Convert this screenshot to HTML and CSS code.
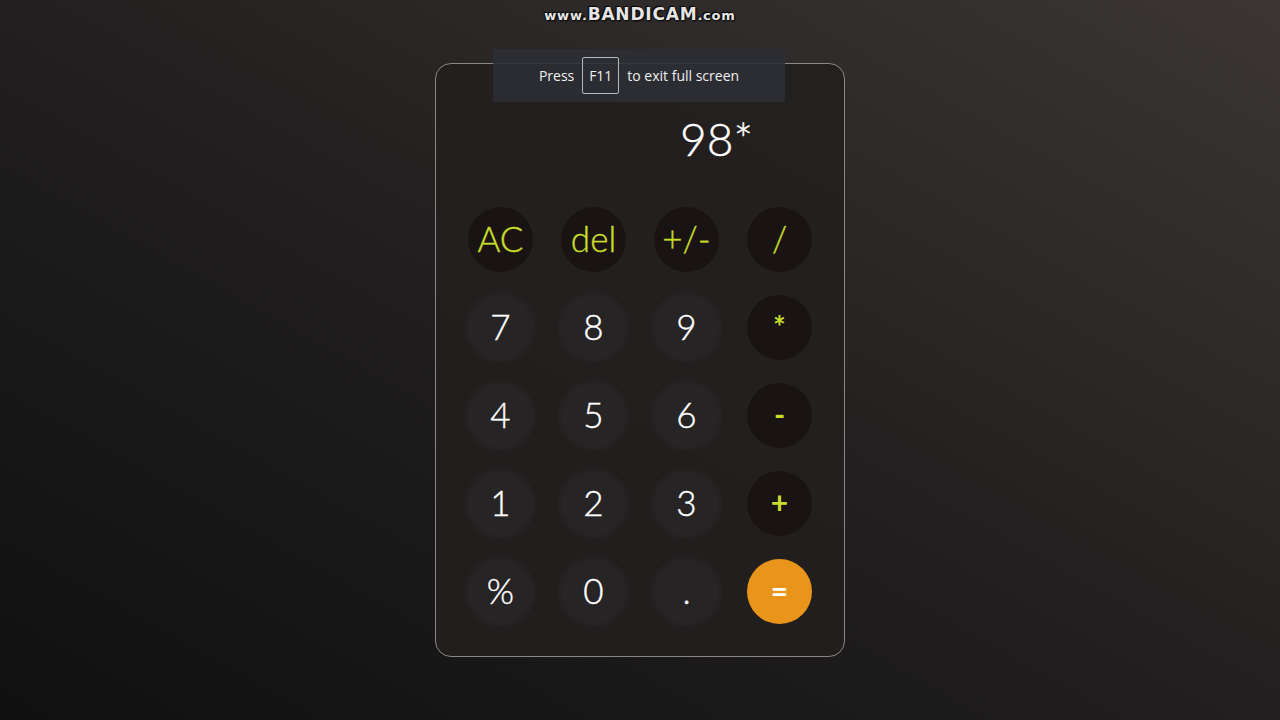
FILE: index.html
```html
<!DOCTYPE html>
<html lang="en">
<head>
<meta charset="utf-8">
<title>Calculator</title>
<link rel="stylesheet" href="styles.css">
</head>
<body>
  <div class="watermark"><span class="wm-small">www.</span>BANDICAM<span class="wm-small">.com</span></div>
  <div class="fs-banner">Press <span class="key">F11</span> to exit full screen</div>
  <main class="stage">
    <div class="calc">
      <div class="display">98*</div>
      <div class="keys">
        <button class="btn op">AC</button>
        <button class="btn op">del</button>
        <button class="btn op">+/-</button>
        <button class="btn op">/</button>
        <button class="btn num">7</button>
        <button class="btn num">8</button>
        <button class="btn num">9</button>
        <button class="btn op small">*</button>
        <button class="btn num">4</button>
        <button class="btn num">5</button>
        <button class="btn num">6</button>
        <button class="btn op small">-</button>
        <button class="btn num">1</button>
        <button class="btn num">2</button>
        <button class="btn num">3</button>
        <button class="btn op small">+</button>
        <button class="btn num">%</button>
        <button class="btn num">0</button>
        <button class="btn num">.</button>
        <button class="btn equal small">=</button>
      </div>
    </div>
  </main>
</body>
</html>
```
FILE: styles.css
```css
* { box-sizing: border-box; }
html, body { margin: 0; height: 100%; }
body {
  background: linear-gradient(to top right, #111010 0%, #1f1d1d 45%, #3b3634 100%);
  font-family: "Lato", "Inter", sans-serif;
  color: #fff;
  overflow: hidden;
}
.stage {
  height: 720px;
  display: flex;
  justify-content: center;
  align-items: flex-start;
  padding-top: 63px;
}
.calc {
  width: 410px;
  height: 594px;
  border: 1px solid #8a8786;
  border-radius: 16px;
  background: rgba(34, 31, 31, 0.9);
  padding: 0 32px 32px 32px;
  display: flex;
  flex-direction: column;
}
.display {
  height: 143px;
  display: flex;
  align-items: center;
  justify-content: flex-end;
  padding-right: 59px;
  padding-top: 6px;
  font-size: 46px;
  font-weight: 300;
  color: #fff;
  -webkit-text-stroke: 0.4px #fff;
}
.keys {
  display: grid;
  grid-template-columns: repeat(4, 65px);
  grid-auto-rows: 65px;
  column-gap: 28px;
  row-gap: 23px;
}
.btn {
  width: 65px;
  height: 65px;
  border: none;
  border-radius: 50%;
  font-family: "Lato", "Inter", sans-serif;
  font-weight: 300;
  font-size: 35px;
  padding: 0 0 4px 0;
  display: flex;
  align-items: center;
  justify-content: center;
  cursor: pointer;
  -webkit-text-stroke: 0.4px currentColor;
}
.num {
  background: #262424;
  color: #fff;
  box-shadow: 0 0 14px 3px rgba(255, 255, 255, 0.025), 0 0 4px 1px rgba(38, 36, 36, 0.9);
}
.op {
  background: #1a1313;
  color: #c8dd2a;
  box-shadow: 0 0 10px rgba(255, 255, 255, 0.02);
}
.small { font-size: 30px; font-weight: 700; -webkit-text-stroke: 0; }
.equal {
  background: #e9951b;
  color: #fff;
}
.watermark {
  position: absolute;
  top: 4px;
  left: 0;
  right: 0;
  text-align: center;
  font-family: "DejaVu Sans", sans-serif;
  font-weight: bold;
  font-size: 17px;
  letter-spacing: 0.8px;
  color: #e6e6e6;
  text-shadow: 1px 1px 2px #000, -1px -1px 1px #000;
}
.wm-small { font-size: 13px; }
.fs-banner {
  position: absolute;
  top: 49px;
  left: 493px;
  width: 292px;
  height: 53px;
  background: rgba(44, 47, 53, 0.88);
  display: flex;
  align-items: center;
  justify-content: center;
  gap: 8px;
  font-family: "Open Sans", "Noto Sans", sans-serif;
  font-size: 14px;
  color: #f0f0f0;
  z-index: 2;
}
.key {
  width: 37px;
  height: 37px;
  border: 1.5px solid #b9b9b9;
  border-radius: 2px;
  display: flex;
  align-items: center;
  justify-content: center;
}
```
